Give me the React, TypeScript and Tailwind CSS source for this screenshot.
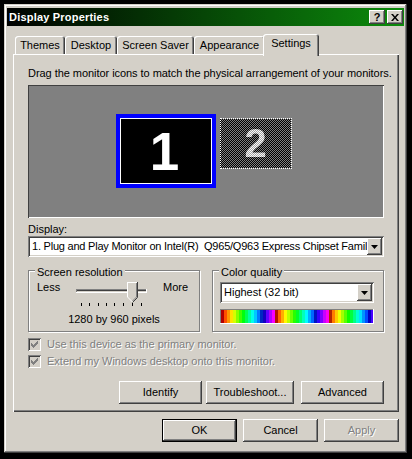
import React from "react";

const raised =
  "shadow-[inset_-1px_-1px_#404040,inset_1px_1px_#ffffff,inset_-2px_-2px_#808080,inset_2px_2px_#d4d0c8]";
const sunken =
  "shadow-[inset_1px_1px_#808080,inset_-1px_-1px_#ffffff,inset_2px_2px_#404040,inset_-2px_-2px_#d4d0c8]";

function Arrow() {
  return (
    <svg width="7" height="4" className="block">
      <path d="M0 0h7L3.5 4z" fill="#000" />
    </svg>
  );
}

function Combo({ text, width, textClass = "" }: { text: string; width: number; textClass?: string }) {
  return (
    <div
      className={`h-[21px] bg-white flex items-center p-[2px] ${sunken}`}
      style={{ width }}
    >
      <div className={`flex-1 overflow-hidden whitespace-pre leading-[13px] pl-[2px] ${textClass}`}>
        {text}
      </div>
      <div className={`w-[15px] h-[17px] bg-[#d4d0c8] flex items-center justify-center shrink-0 ${raised}`}>
        <Arrow />
      </div>
    </div>
  );
}

function Check() {
  return (
    <div className={`w-[13px] h-[13px] bg-[#d4d0c8] shrink-0 relative ${sunken}`}>
      <svg width="7" height="7" className="absolute left-[3px] top-[3px]">
        <g fill="#808080">
          <rect x="6" y="0" width="1" height="1" />
          <rect x="5" y="1" width="2" height="1" />
          <rect x="0" y="2" width="1" height="1" />
          <rect x="4" y="2" width="3" height="1" />
          <rect x="0" y="3" width="2" height="1" />
          <rect x="3" y="3" width="3" height="1" />
          <rect x="0" y="4" width="5" height="1" />
          <rect x="1" y="5" width="3" height="1" />
          <rect x="2" y="6" width="1" height="1" />
        </g>
      </svg>
    </div>
  );
}

function Button({
  children,
  width,
  isDefault,
  disabled,
}: {
  children: React.ReactNode;
  width: number;
  isDefault?: boolean;
  disabled?: boolean;
}) {
  if (isDefault) {
    return (
      <div className="h-[23px] border border-black bg-[#d4d0c8]" style={{ width }}>
        <div className={`h-full w-full flex items-center justify-center leading-[13px] ${raised}`}>
          {children}
        </div>
      </div>
    );
  }
  return (
    <div
      className={`h-[23px] bg-[#d4d0c8] flex items-center justify-center leading-[13px] ${raised} ${
        disabled ? "text-[#808080] [text-shadow:1px_1px_0_#ffffff]" : ""
      }`}
      style={{ width }}
    >
      {children}
    </div>
  );
}

function ColorBar() {
  const rects: React.ReactNode[] = [];
  for (let x = 1; x < 153; x += 3) {
    const pos = ((x - 1) % 53) / 53;
    const hue = pos * 310;
    const light = pos < 0.04 ? 35 : hue > 225 && hue < 250 ? 38 : 50;
    rects.push(
      <rect key={x} x={x} y={1} width={Math.min(3, 153 - x)} height={13} fill={`hsl(${hue.toFixed(0)},100%,${light}%)`} />
    );
  }
  return (
    <svg width="154" height="15" className="block">
      <rect x="0" y="0" width="154" height="15" fill="#ffffff" />
      <rect x="0" y="0" width="153" height="14" fill="#808080" />
      {rects}
    </svg>
  );
}

function Slider() {
  const ticks = [8, 16, 25, 33, 41, 50, 59, 68];
  return (
    <svg width="80" height="26" className="block mt-[1px]">
      <rect x="3" y="7" width="71" height="4" fill="#ffffff" />
      <rect x="3" y="7" width="70" height="3" fill="#808080" />
      <rect x="4" y="8" width="69" height="1" fill="#404040" />
      <rect x="4" y="9" width="69" height="1" fill="#d4d0c8" />
      <polygon points="54,0 65,0 65,15 59.5,20.5 54,15" fill="#d4d0c8" />
      <line x1="54.5" y1="0" x2="54.5" y2="15" stroke="#ffffff" />
      <line x1="54" y1="0.5" x2="64" y2="0.5" stroke="#ffffff" />
      <line x1="54.5" y1="15" x2="59.5" y2="20" stroke="#ffffff" />
      <line x1="64.5" y1="0" x2="64.5" y2="15.5" stroke="#404040" />
      <line x1="63.5" y1="1" x2="63.5" y2="15" stroke="#808080" />
      <line x1="64.5" y1="15.5" x2="59.5" y2="20.5" stroke="#404040" />
      <line x1="63.5" y1="15" x2="59.5" y2="19" stroke="#808080" />
      {ticks.map((t) => (
        <rect key={t} x={t} y={21} width={1} height={3} fill="#000" />
      ))}
    </svg>
  );
}

function Group({
  label,
  children,
  className = "",
}: {
  label: string;
  children: React.ReactNode;
  className?: string;
}) {
  return (
    <div
      className={`relative w-[172px] h-[62px] border border-[#808080] shadow-[inset_1px_1px_#ffffff,1px_1px_#ffffff] ${className}`}
    >
      <span className="absolute left-[6px] top-[-5px] px-[2px] bg-[#d4d0c8] leading-[13px]">
        {label}
      </span>
      {children}
    </div>
  );
}

function Tab({ label, width, selected }: { label: string; width: number; selected?: boolean }) {
  if (selected) {
    return (
      <div
        className="relative z-10 -ml-[2px] h-[22px] bg-[#d4d0c8] rounded-t-[3px] shadow-[inset_1px_1px_#ffffff,inset_-1px_0_#404040,inset_-2px_0_#808080] flex justify-center pt-[3px] leading-[13px]"
        style={{ width }}
      >
        {label}
      </div>
    );
  }
  return (
    <div
      className="mt-[2px] h-[18px] bg-[#d4d0c8] rounded-t-[3px] shadow-[inset_1px_1px_#ffffff,inset_-1px_0_#404040,inset_-2px_0_#808080] flex justify-center items-center leading-[13px]"
      style={{ width }}
    >
      {label}
    </div>
  );
}

export default function App() {
  return (
    <div className="w-[412px] h-[459px] bg-black p-[4px] font-['Liberation_Sans',Arial,sans-serif] text-[11px] text-black">
      <div className="w-[403px] h-[449px] bg-[#d4d0c8] shadow-[inset_-1px_-1px_#404040,inset_1px_1px_#d4d0c8,inset_-2px_-2px_#808080,inset_2px_2px_#ffffff] pt-[4px] px-[3px] flex flex-col">
        {/* Title bar */}
        <div className="h-[18px] bg-[linear-gradient(to_right,#000000,#0c8c0c)] flex items-center pl-[2px] pr-[1px]">
          <span className="flex-1 text-white font-bold leading-[13px] tracking-[0.2px]">
            Display Properties
          </span>
          <div className={`w-[16px] h-[14px] bg-[#d4d0c8] flex items-center justify-center font-bold leading-[11px] text-[11px] ${raised}`}>
            ?
          </div>
          <div className={`ml-[2px] w-[16px] h-[14px] bg-[#d4d0c8] flex items-center justify-center ${raised}`}>
            <svg width="8" height="7" className="block">
              <path d="M0 0h2l2 2.5L6 0h2L5 3.5L8 7H6L4 4.5L2 7H0l3-3.5z" fill="#000" />
            </svg>
          </div>
        </div>

        {/* Tabs */}
        <div className="mt-[8px] h-[20px] pl-[8px] flex items-start">
          <Tab label="Themes" width={50} />
          <Tab label="Desktop" width={52} />
          <Tab label="Screen Saver" width={77} />
          <Tab label="Appearance" width={71} />
          <Tab label="Settings" width={56} selected />
        </div>

        {/* Panel */}
        <div className="ml-[6px] w-[386px] h-[358px] shadow-[inset_1px_1px_#ffffff,inset_-1px_-1px_#404040,inset_-2px_-2px_#808080] pl-[15px] pr-[15px] pt-[13px] flex flex-col">
          <div className="h-[13px] leading-[13px] whitespace-nowrap tracking-[-0.05px]">
            Drag the monitor icons to match the physical arrangement of your monitors.
          </div>

          <div className="mt-[5px] h-[133px] w-[356px] bg-[#808080] shadow-[inset_1px_1px_#404040,inset_-1px_-1px_#ffffff] flex items-start pl-[88px] pt-[29px]">
            <div className="w-[100px] h-[74px] border-[4px] border-[#0000ff]">
              <div className="w-full h-full border border-white bg-black flex items-center justify-center">
                <span className="text-white font-bold text-[53px] leading-none pr-[3px]">1</span>
              </div>
            </div>
            <div className="ml-[4px] mt-[4px] w-[72px] h-[51px] border border-dotted border-white bg-[image:repeating-conic-gradient(#000000_0_25%,#808080_0_50%)] bg-[length:2px_2px] flex items-center justify-center">
              <span className="font-bold text-[40px] leading-none bg-[image:repeating-conic-gradient(#ffffff_0_25%,#a0a0a0_0_50%)] bg-[length:2px_2px] bg-clip-text text-transparent pr-[1px] pb-[1px]">
                2
              </span>
            </div>
          </div>

          <div className="mt-[5px] h-[13px] leading-[13px]">Display:</div>
          <Combo
            text="1. Plug and Play Monitor on Intel(R)  Q965/Q963 Express Chipset Famil"
            width={356}
            textClass="tracking-[-0.22px]"
          />

          <div className="mt-[13px] flex">
            <Group label="Screen resolution">
              <div className="flex items-start pl-[8px] pt-[10px]">
                <span className="w-[36px] leading-[13px]">Less</span>
                <Slider />
                <span className="ml-[10px] leading-[13px]">More</span>
              </div>
              <div className="mt-[5px] text-center leading-[13px]">1280 by 960 pixels</div>
            </Group>
            <Group label="Color quality" className="ml-[12px]">
              <div className="pl-[7px] pt-[11px]">
                <Combo text="Highest (32 bit)" width={154} />
                <div className="mt-[6px]">
                  <ColorBar />
                </div>
              </div>
            </Group>
          </div>

          <div className="mt-[6px] h-[17px] flex items-start">
            <Check />
            <span className="ml-[6px] leading-[13px] text-[#808080] [text-shadow:1px_1px_0_#ffffff]">
              Use this device as the primary monitor.
            </span>
          </div>
          <div className="h-[17px] flex items-start">
            <Check />
            <span className="ml-[6px] leading-[13px] text-[#808080] [text-shadow:1px_1px_0_#ffffff]">
              Extend my Windows desktop onto this monitor.
            </span>
          </div>

          <div className="mt-[9px] flex justify-end">
            <Button width={83}>Identify</Button>
            <div className="ml-[4px]">
              <Button width={88}>Troubleshoot...</Button>
            </div>
            <div className="ml-[7px]">
              <Button width={83}>Advanced</Button>
            </div>
          </div>
        </div>

        {/* Bottom buttons */}
        <div className="mt-[7px] flex justify-end pr-[5px] gap-[6px]">
          <Button width={75} isDefault>
            OK
          </Button>
          <Button width={75}>Cancel</Button>
          <Button width={75} disabled>
            Apply
          </Button>
        </div>
      </div>
    </div>
  );
}
